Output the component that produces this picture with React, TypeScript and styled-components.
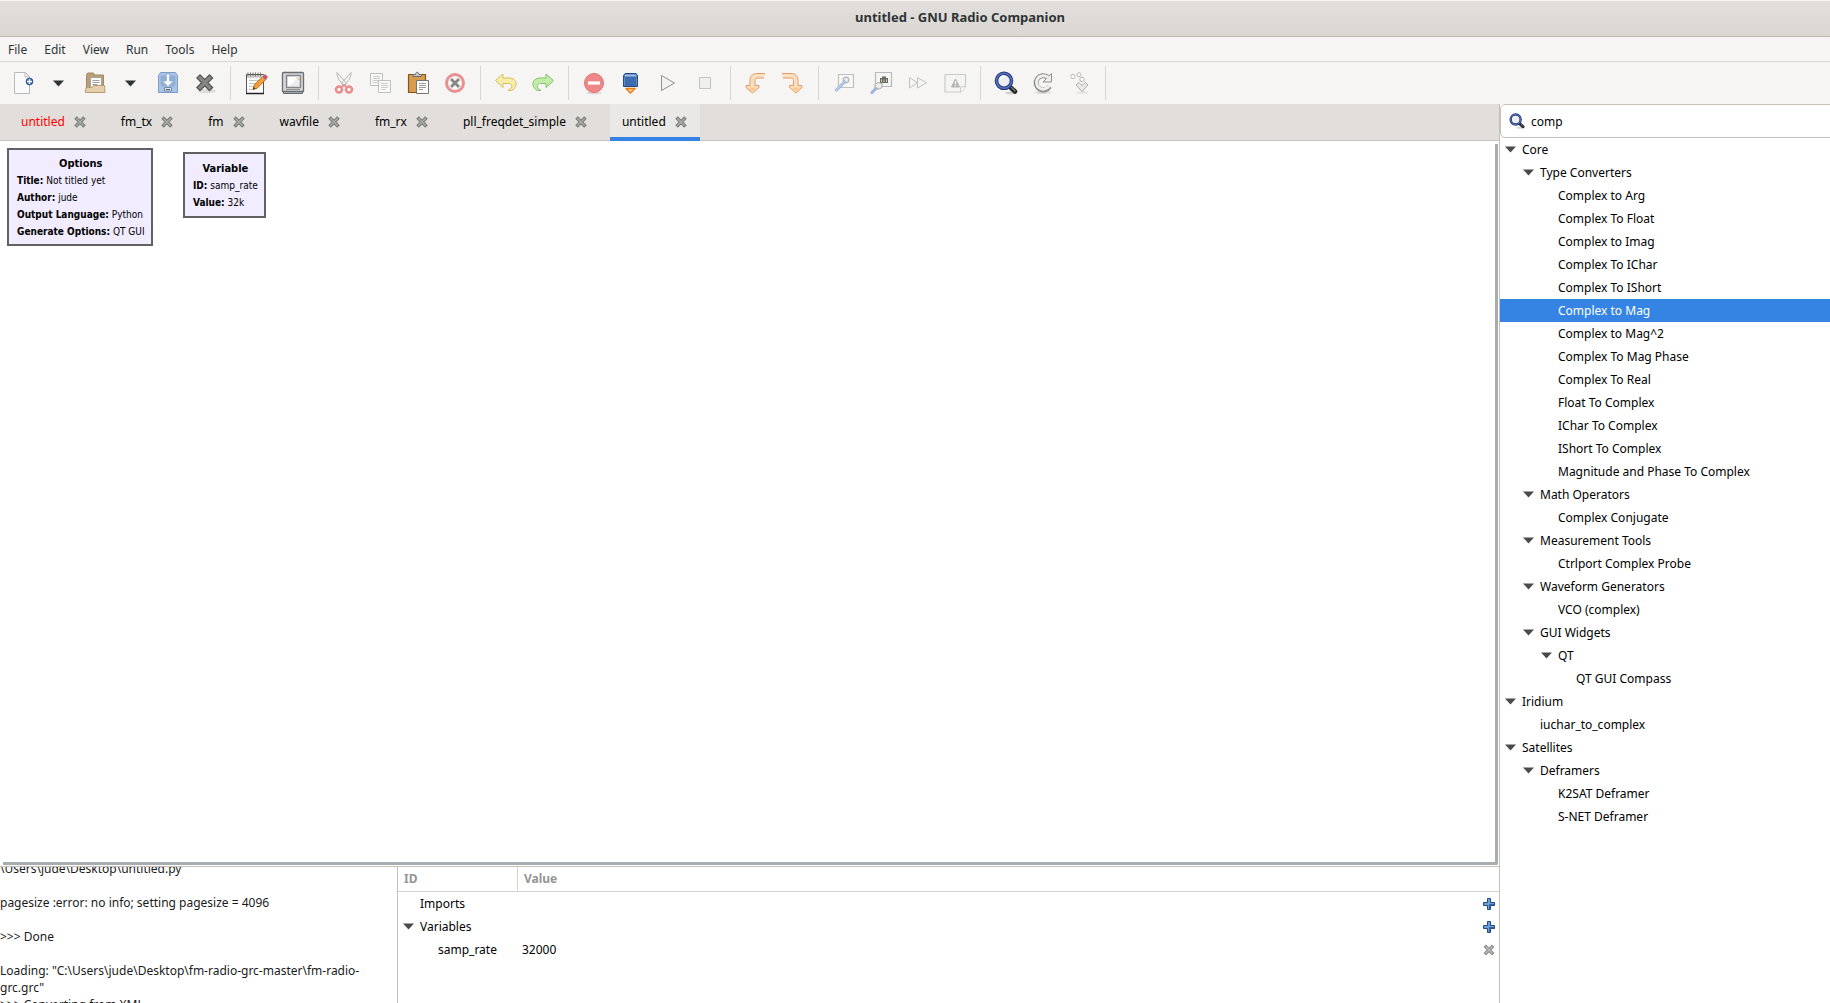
import React from 'react';
import styled, { createGlobalStyle, css } from 'styled-components';

const uiFont = '"Noto Sans", "Open Sans", sans-serif';

const GlobalStyle = createGlobalStyle`
  * { box-sizing: border-box; }
  body { margin: 0; background: #fff; overflow: hidden; }
  button { font: inherit; color: inherit; background: none; border: 0; padding: 0; margin: 0; }
  svg { display: block; flex: none; }
`;

const Window = styled.div`
  height: 100vh;
  display: flex;
  flex-direction: column;
  font: 12px/17px ${uiFont};
  color: #000;
  background: #fff;
`;

const TitleBar = styled.header`
  flex: none;
  height: 37px;
  display: flex;
  align-items: center;
  justify-content: center;
  padding: 0 0 2px 90px;
  border-top: 1px solid #f6f5f4;
  border-bottom: 1px solid #bfb8b1;
  background: linear-gradient(#e2dfdc, #dad6d2);
`;

const WindowTitle = styled.h1`
  margin: 0;
  font-size: 13px;
  line-height: 17px;
  font-weight: 700;
  color: #2e3436;
`;

const MenuBar = styled.nav`
  flex: none;
  height: 25px;
  display: flex;
  align-items: center;
  gap: 17px;
  padding: 0 8px;
  border-bottom: 1px solid #dbd8d5;
  background: #f6f5f4;
  color: #2e3436;
`;

const MenuItem = styled.button``;

const ToolBar = styled.div`
  flex: none;
  height: 42px;
  display: flex;
  align-items: center;
  padding: 0 5px;
  background: #f6f5f4;
`;

const ToolButton = styled.button<{ $narrow?: boolean }>`
  width: ${p => (p.$narrow ? 35 : 37)}px;
  height: 34px;
  display: flex;
  align-items: center;
  justify-content: center;
  padding-right: ${p => (p.$narrow ? 2 : 0)}px;
`;

const Divider = styled.span`
  width: 1px;
  height: 34px;
  margin: 0 6px 0 7px;
  background: #d8d5d2;
`;

const Body = styled.div`
  flex: 1;
  min-height: 0;
  display: grid;
  grid-template-columns: minmax(0, 1fr) 330px;
`;

const Workspace = styled.main`
  min-height: 0;
  display: flex;
  flex-direction: column;
  border-right: 1px solid #c5bfba;
`;

const TabBar = styled.div`
  flex: none;
  height: 37px;
  display: flex;
  gap: 10px;
  padding-left: 9px;
  border-bottom: 1px solid #c9c4be;
  background: #e1dedb;
`;

const Tab = styled.div<{ $active?: boolean; $dirty?: boolean }>`
  display: flex;
  align-items: center;
  gap: 7px;
  padding: 0 11px 1px 12px;
  color: ${p => (p.$dirty ? '#f00' : '#000')};
  ${p => p.$active && css`
    background: #eae8e6;
    box-shadow: inset 0 -4px #3584e4;
    margin-bottom: -1px;
    padding-bottom: 2px;
  `}
`;

const Canvas = styled.section`
  position: relative;
  flex: 1;
  min-height: 0;
  margin: 3px 1px 1px 3px;
  border-right: 3px solid #a8adaf;
  border-bottom: 3px solid #a8adaf;
  border-bottom-right-radius: 2px;
`;

const Block = styled.article<{ $x: number; $y: number }>`
  position: absolute;
  left: ${p => p.$x}px;
  top: ${p => p.$y}px;
  min-height: 66px;
  display: flex;
  flex-direction: column;
  justify-content: center;
  padding: 5px 6px 4px 8px;
  border: 2px solid #616161;
  background: #f1ecff;
  font: 10px/17px "DejaVu Sans Condensed", "DejaVu Sans", sans-serif;
  font-stretch: condensed;
  white-space: nowrap;
`;

const BlockTitle = styled.h2`
  margin: 0;
  font-size: 11px;
  line-height: 17px;
  text-align: center;
`;

const Param = styled.div``;

const BottomPane = styled.div`
  flex: none;
  height: 137px;
  display: grid;
  grid-template-columns: 397px minmax(0, 1fr);
  border-top: 1px solid #c5bfba;
`;

const Console = styled.pre`
  margin: 0;
  display: flex;
  align-items: flex-start;
  overflow: hidden;
  font: 12px/17px ${uiFont};
  color: #1a1a1a;
`;

const ConsoleText = styled.code`
  font: inherit;
  margin-top: -7px;
`;

const VariablePane = styled.div`
  border-left: 1px solid #c5bfba;
`;

const VariableTable = styled.table`
  width: 100%;
  table-layout: fixed;
  border-collapse: separate;
  border-spacing: 0;
`;

const HeadCell = styled.th<{ $width?: number }>`
  width: ${p => (p.$width ? p.$width + 'px' : 'auto')};
  height: 25px;
  padding: 0 6px 2px;
  text-align: left;
  font-weight: 700;
  color: #929595;
  border-bottom: 1px solid #d5d2cf;
  &:nth-child(2) { border-left: 1px solid #d5d2cf; }
`;

const Cell = styled.td<{ $indent?: number }>`
  height: 23px;
  padding: 0 0 0 ${p => p.$indent ?? 5}px;
`;

const CellLine = styled.div`
  display: flex;
  align-items: center;
  gap: 6px;
`;

const CellButton = styled.button`
  display: block;
`;

const Sidebar = styled.aside`
  display: flex;
  flex-direction: column;
  background: #fff;
  overflow: hidden;
`;

const SearchBox = styled.label`
  flex: none;
  height: 34px;
  display: flex;
  align-items: center;
  gap: 6px;
  margin-right: -6px;
  padding-left: 8px;
  border: 1px solid #c8c2bb;
  border-radius: 5px;
`;

const SearchInput = styled.input`
  flex: 1;
  min-width: 0;
  border: 0;
  outline: 0;
  padding: 0;
  font: 12px/17px ${uiFont};
`;

const Tree = styled.ul`
  margin: 0;
  padding: 0;
  list-style: none;
`;

const TreeRow = styled.li<{ $depth: number; $selected?: boolean }>`
  height: 23px;
  display: flex;
  align-items: center;
  gap: 6px;
  padding-left: ${p => 5 + p.$depth * 18}px;
  background: ${p => (p.$selected ? '#3584e4' : 'transparent')};
  color: ${p => (p.$selected ? '#fff' : '#000')};
`;

const Spacer = styled.span`
  width: 11px;
`;

const Icon = ({ children, size = 24 }: { children: React.ReactNode; size?: number }) => (
  <svg width={size} height={size} viewBox="0 0 24 24" fill="none" strokeLinejoin="round" aria-hidden="true">{children}</svg>
);

const Arrow = ({ color = '#4a4a4a' }: { color?: string }) => (
  <svg width="11" height="7" viewBox="0 0 11 7" aria-hidden="true"><path d="M0 .5h11L5.500 6.500z" fill={color} /></svg>
);

const SmallClose = () => (
  <svg width="16" height="16" viewBox="0 0 16 16" aria-hidden="true">
    <path d="M4.800 4.800l6.400 6.400M11.200 4.800l-6.400 6.400" stroke="#777b76" strokeWidth="3.600" strokeLinecap="square" />
    <path d="M4.800 4.800l6.400 6.400M11.200 4.800l-6.400 6.400" stroke="#a9aca8" strokeWidth="1.600" strokeLinecap="square" />
  </svg>
);

const Plus = () => (
  <svg width="12" height="12" viewBox="0 0 12 12" aria-hidden="true">
    <path d="M4.500.5h3v4h4v3h-4v4h-3v-4h-4v-3h4z" fill="#6f9fd6" stroke="#204a87" strokeLinejoin="round" />
    <path d="M6 6h5v1H7v4H6z" fill="#3465a4" />
  </svg>
);

const GreyCross = () => (
  <svg width="12" height="12" viewBox="0 0 12 12" aria-hidden="true">
    <path d="M3 3l6 6M9 3l-6 6" stroke="#888a85" strokeWidth="3.400" strokeLinecap="square" />
    <path d="M3 3l6 6M9 3l-6 6" stroke="#bcbeba" strokeWidth="1.400" strokeLinecap="square" />
  </svg>
);

const Magnifier = ({ size }: { size?: number }) => (
  <Icon size={size}>
    <ellipse cx="17" cy="22" rx="6" ry="1.500" fill="#000" opacity=".15" />
    <path d="M15.500 15.500l5.500 5" stroke="#222" strokeWidth="4.500" strokeLinecap="round" />
    <path d="M17.500 16.500l3.500 3.500" stroke="#77796f" strokeWidth="1.500" strokeLinecap="round" />
    <circle cx="10" cy="9.800" r="7.500" fill="#eceef2" stroke="#26367c" strokeWidth="3.600" />
    <circle cx="10" cy="9.800" r="7.500" stroke="#5873bd" strokeWidth="1.500" />
    <path d="M6 9a4.500 4.500 0 014-4" stroke="#fff" strokeWidth="2" />
  </Icon>
);

const icons: Record<string, React.ReactNode> = {
  New: <Icon>
    <path d="M2.500 1.500h11l4 4v17h-15z" fill="#fafafa" stroke="#b8bab6" />
    <path d="M13 2v4h4.500" fill="#e6e6e4" stroke="#c4c6c2" />
    <circle cx="17.500" cy="10.500" r="3.500" fill="#3465a4" stroke="#204a87" strokeWidth=".6" />
    <path d="M17.500 8v5M15 10.500h5" stroke="#fff" strokeWidth="1.400" />
  </Icon>,
  Open: <Icon>
    <path d="M2.500 20V3.500l1-1.500h6l1 2h9v16z" fill="#b99f75" stroke="#a08a66" />
    <path d="M6.500 6.500h11v10h-11z" fill="#fafafa" stroke="#a3a39c" />
    <path d="M8.500 9.500h7M8.500 11.500h7M8.500 13.500h5" stroke="#a0a29d" />
    <path d="M1.500 21.500l.5-5h6l1.500-2h11l.5 7z" fill="#e7cfae" stroke="#b89c76" />
  </Icon>,
  Save: <Icon>
    <path d="M4.500 1.500h15l2 3v17h-19v-17z" fill="#a9c3e4" stroke="#7f9cc6" />
    <path d="M4.500 4.500h15v8l-1 3h-13l-1-3z" fill="#8fafd8" />
    <path d="M10.500 3h3v7h4L12 15.500 6.500 10h4z" fill="#fcfcfc" stroke="#8ca5c4" strokeWidth=".6" />
    <path d="M8.500 16.500h7v3.500h-7z" fill="#e0e4e9" stroke="#718aaa" /><path d="M10 18.500h4" stroke="#596c86" />
  </Icon>,
  Close: <Icon>
    <ellipse cx="14" cy="20" rx="9" ry="2" fill="#000" opacity=".1" />
    <path d="M7 7l9.500 9.500M16.500 7L7 16.500" stroke="#505350" strokeWidth="5.600" strokeLinecap="square" />
    <path d="M7 7l9.500 9.500M16.500 7L7 16.500" stroke="#858884" strokeWidth="3.200" strokeLinecap="square" />
  </Icon>,
  Edit: <Icon>
    <path d="M2.500 3.500h17v19h-17z" fill="#fff" stroke="#50534f" />
    <path d="M3 4h16v3H3z" fill="#d5d6d2" /><path d="M2 22.500h18" stroke="#222" strokeWidth="1.500" />
    <path d="M4 1.500v4M6.500 1.500v4M9 1.500v4M11.500 1.500v4M14 1.500v4M16.500 1.500v4" stroke="#70726e" />
    <path d="M5 9.500h11M5 12.500h8M5 15.500h5M5 18.500h4" stroke="#c4c6c2" />
    <path d="M9 18.500l1.200-4.500 9-9 3.200 3-9.400 9.400z" fill="#f5a13a" stroke="#a35c0a" strokeWidth=".8" />
    <path d="M18 6l3.200 3 2-2c1-2-1.700-4-3.200-3z" fill="#e34b4b" stroke="#a5aab0" />
    <path d="M9 18.500l.8-2.500 1.600 1.500z" fill="#222" />
  </Icon>,
  Screen: <Icon>
    <path d="M2.500 1.500h19a1 1 0 011 1v18h-21v-18a1 1 0 011-1z" fill="#d8d8da" stroke="#6a6c70" strokeWidth="1.300" />
    <path d="M2.500 20.500h19v2h-19z" fill="#a2a3a5" stroke="#6a6c70" />
    <path d="M5.500 4.500h14v12h-14z" fill="#ececec" stroke="#85878a" strokeWidth="1.400" />
    <path d="M7 15V6h8c-1 5-4 7-8 9z" fill="#fff" /><path d="M5 18.500h14" stroke="#929497" />
    <path d="M18 7v2" stroke="#efa350" />
  </Icon>,
  Cut: <Icon>
    <path d="M5 1.500c-.5 5 3 9 7.500 13l2-2.500C11.500 9 8 5 5 1.500zM19 1.500c.5 5-3 9-7.500 13l-2-2.500C12.500 9 16 5 19 1.500z" fill="#f4f4f4" stroke="#b4b6b3" />
    <circle cx="7" cy="18.500" r="3" stroke="#e98d8d" strokeWidth="2.600" /><circle cx="17" cy="18.500" r="3" stroke="#e98d8d" strokeWidth="2.600" />
    <path d="M9.500 16l2.500-2 2.500 2" stroke="#e98d8d" strokeWidth="1.800" />
  </Icon>,
  Copy: <Icon>
    <path d="M1.500 2.500h12v12h-12z" fill="#f7f7f6" stroke="#bfc1be" /><path d="M4 5.500h7M4 7.500h7M4 9.500h7M4 11.500h5" stroke="#cfd0cd" />
    <path d="M9.500 9.500h12v12h-12z" fill="#f9f9f8" stroke="#bfc1be" /><path d="M12 12.500h7M12 14.500h7M12 16.500h7M12 18.500h5" stroke="#cfd0cd" />
  </Icon>,
  Paste: <Icon>
    <path d="M2.500 3.500h17v18h-17z" fill="#d79c4d" stroke="#865616" strokeWidth="1.200" />
    <path d="M7 5.500v-2h2.500c0-3 3.500-3 3.500 0h2.500v2z" fill="#c7c8c6" stroke="#6c6e6b" />
    <path d="M10.500 9.500h12v13h-12z" fill="#fff" stroke="#727570" /><path d="M13 12.500h7M13 14.500h7M13 16.500h7M13 18.500h4" stroke="#9a9c98" />
  </Icon>,
  Delete: <Icon>
    <circle cx="12" cy="12" r="8.500" fill="#f8f5f4" stroke="#e99090" strokeWidth="3" />
    <path d="M9 9l6 6M15 9l-6 6" stroke="#858785" strokeWidth="2.800" strokeLinecap="square" />
  </Icon>,
  Undo: <Icon>
    <path d="M1.500 9.500L9 3v4h6c9 0 9 10 2.500 12.500h-3.500c5-2 5-7 .5-7H9v4z" fill="#f7eca8" stroke="#d4bf5f" />
  </Icon>,
  Redo: <Icon>
    <path d="M22.500 9.500L15 3v4H9c-9 0-9 10-2.500 12.500H10c-5-2-5-7-.5-7H15v4z" fill="#c3ecaa" stroke="#85c16b" />
  </Icon>,
  Errors: <Icon>
    <ellipse cx="12" cy="22" rx="8" ry="1.500" fill="#000" opacity=".1" />
    <circle cx="12" cy="12" r="9.500" fill="#ee8787" stroke="#df7474" /><path d="M6 12h12" stroke="#fff" strokeWidth="3.200" />
  </Icon>,
  Generate: <Icon>
    <path d="M6 2.500h11l1.500 2v11h-14v-11z" fill="#3d6db0" stroke="#254b86" /><path d="M6 3.500h11l.5 2H5.500z" fill="#a5c0e2" />
    <path d="M5.500 6.500v8M17.500 6.500v8" stroke="#6f95c8" strokeWidth=".8" />
    <path d="M7 17.500h9l-4.500 4.500z" fill="#fbd19a" stroke="#ef7c0e" strokeWidth="1.500" />
  </Icon>,
  Run: <Icon><path d="M5.500 4.500v15l13-7.500z" fill="#f2f2f1" stroke="#90928f" /></Icon>,
  Stop: <Icon><path d="M6.500 6.500h11v11h-11z" fill="#efefee" stroke="#c2c4c1" /></Icon>,
  RotateLeft: <Icon>
    <path d="M21 2.500h-8c-5 0-7 3-7 7v5H2v2l6.500 5.500L15 16.500v-2h-4v-5c0-2 1-2.500 4-2.500h5" fill="#fce0bd" stroke="#df9c68" />
    <path d="M4 16.500h8.500l-4 4z" fill="#f9c88f" />
  </Icon>,
  RotateRight: <Icon>
    <path d="M1 2.500h9c5 0 7 3 7 7v5h4v2l-6 5.500-6.500-5.500v-2h4v-5c0-2-1-2.500-4-2.500H2" fill="#fce0bd" stroke="#df9c68" />
    <path d="M11 16.500h8l-4 4z" fill="#f9c88f" />
  </Icon>,
  Probe: <Icon>
    <path d="M6.500 3.500h15v13h-15z" fill="#f7f7f6" stroke="#bfc1be" strokeWidth="1.200" />
    <circle cx="14" cy="9" r="2.800" stroke="#b3b9c2" fill="#e6ebf2" strokeWidth="1.300" />
    <path d="M13.500 10l-10 10" stroke="#9bb6db" strokeWidth="3" /><path d="M13.500 10l-10 10" stroke="#cfdef2" />
  </Icon>,
  Plug: <Icon>
    <path d="M6.500 1.500h16v14h-16z" fill="#f5f5f4" stroke="#b8bab7" strokeWidth="1.200" />
    <path d="M11 12V7h2V5.500h4V7h2v5z" fill="#686a67" /><path d="M12.500 11V8.500M15 11V8.500M17.500 11V8.500" stroke="#d8c89c" />
    <path d="M6 13.500l3-2 4 1v4l-3 1.500H6z" fill="#ececeb" stroke="#a9aba8" /><path d="M8 16.500l-6 6" stroke="#9bb6db" strokeWidth="3" />
  </Icon>,
  Forward: <Icon><path d="M3.500 6.500v10.500l8-5.250zM11.500 6.500v10.500l9-5.250z" fill="#f5f5f4" stroke="#c1c3c0" /></Icon>,
  Warn: <Icon>
    <path d="M2.500 3.500h20v12l-5 5.500h-15.500v-17z" fill="#f4f4f3" stroke="#c9cbc8" strokeWidth="1.200" />
    <path d="M22.500 15.500l-5 .5v5" fill="#fff" stroke="#c9cbc8" />
    <path d="M12.500 8l4 8h-8z" fill="#b3b5b2" stroke="#b3b5b2" /><path d="M12.500 10v3.200M12.500 14v1.300" stroke="#fff" strokeWidth="1.200" />
  </Icon>,
  Find: <Magnifier />,
  Reload: <Icon>
    <ellipse cx="12" cy="21.500" rx="9" ry="1.500" fill="#000" opacity=".1" />
    <path d="M18.500 15.500A7.200 7.200 0 1116.500 6" stroke="#8e908d" strokeWidth="5" />
    <path d="M20.500 2.500v8.500h-8.500z" fill="#eeeeed" stroke="#8e908d" />
    <path d="M18 15.200A6.800 6.800 0 1117 6.500" stroke="#eeeeed" strokeWidth="3" />
  </Icon>,
  Hier: <Icon>
    <g stroke="#b9bbb8" fill="#f7f7f6"><circle cx="5" cy="5.500" r="2.200" /><circle cx="11" cy="3.700" r="2" /><circle cx="14" cy="8.500" r="2.300" />
    <path d="M8 14l2.500-2.500 3.500 3 3.500-3L20 14l-6 6.500z" fill="#e9e9e8" stroke="#aaaca9" /></g>
    <ellipse cx="14" cy="21.500" rx="6" ry="1.200" fill="#000" opacity=".08" />
  </Icon>,
};

const toolGroups: string[][] = [
  ['New', 'v', 'Open', 'v', 'Save', 'Close'],
  ['Edit', 'Screen'],
  ['Cut', 'Copy', 'Paste', 'Delete'],
  ['Undo', 'Redo'],
  ['Errors', 'Generate', 'Run', 'Stop'],
  ['RotateLeft', 'RotateRight'],
  ['Probe', 'Plug', 'Forward', 'Warn'],
  ['Find', 'Reload', 'Hier'],
];

const tabs = ['untitled', 'fm_tx', 'fm', 'wavfile', 'fm_rx', 'pll_freqdet_simple', 'untitled'];

type Node = [depth: number, label: string, open?: boolean];
const tree: Node[] = [
  [0, 'Core', true],
  [1, 'Type Converters', true],
  [2, 'Complex to Arg'],
  [2, 'Complex To Float'],
  [2, 'Complex to Imag'],
  [2, 'Complex To IChar'],
  [2, 'Complex To IShort'],
  [2, 'Complex to Mag'],
  [2, 'Complex to Mag^2'],
  [2, 'Complex To Mag Phase'],
  [2, 'Complex To Real'],
  [2, 'Float To Complex'],
  [2, 'IChar To Complex'],
  [2, 'IShort To Complex'],
  [2, 'Magnitude and Phase To Complex'],
  [1, 'Math Operators', true],
  [2, 'Complex Conjugate'],
  [1, 'Measurement Tools', true],
  [2, 'Ctrlport Complex Probe'],
  [1, 'Waveform Generators', true],
  [2, 'VCO (complex)'],
  [1, 'GUI Widgets', true],
  [2, 'QT', true],
  [3, 'QT GUI Compass'],
  [0, 'Iridium', true],
  [1, 'iuchar_to_complex'],
  [0, 'Satellites', true],
  [1, 'Deframers', true],
  [2, 'K2SAT Deframer'],
  [2, 'S-NET Deframer'],
];

const log = `\\Users\\jude\\Desktop\\untitled.py

pagesize :error: no info; setting pagesize = 4096

>>> Done

Loading: "C:\\Users\\jude\\Desktop\\fm-radio-grc-master\\fm-radio-
grc.grc"
>>> Converting from XML...`;

export default function App() {
  return (
    <Window>
      <GlobalStyle />
      <TitleBar><WindowTitle>untitled - GNU Radio Companion</WindowTitle></TitleBar>
      <MenuBar>
        {['File', 'Edit', 'View', 'Run', 'Tools', 'Help'].map(m => <MenuItem key={m}>{m}</MenuItem>)}
      </MenuBar>
      <ToolBar>
        {toolGroups.map((group, g) => (
          <React.Fragment key={g}>
            {group.map((name, i) => name === 'v'
              ? <ToolButton key={i} $narrow aria-label={`${group[i - 1]} menu`}><Arrow color="#2e3436" /></ToolButton>
              : <ToolButton key={i} aria-label={name}>{icons[name]}</ToolButton>)}
            <Divider />
          </React.Fragment>
        ))}
      </ToolBar>
      <Body>
        <Workspace>
          <TabBar>
            {tabs.map((t, i) => (
              <Tab key={i} $dirty={i === 0} $active={i === tabs.length - 1}>
                <button>{t}</button>
                <button aria-label={`Close ${t}`}><SmallClose /></button>
              </Tab>
            ))}
          </TabBar>
          <Canvas>
            <Block $x={4} $y={4}>
              <BlockTitle>Options</BlockTitle>
              <Param><b>Title:</b> Not titled yet</Param>
              <Param><b>Author:</b> jude</Param>
              <Param><b>Output Language:</b> Python</Param>
              <Param><b>Generate Options:</b> QT GUI</Param>
            </Block>
            <Block $x={180} $y={8}>
              <BlockTitle>Variable</BlockTitle>
              <Param><b>ID:</b> samp_rate</Param>
              <Param><b>Value:</b> 32k</Param>
            </Block>
          </Canvas>
          <BottomPane>
            <Console><ConsoleText>{log}</ConsoleText></Console>
            <VariablePane>
              <VariableTable>
                <thead>
                  <tr><HeadCell $width={119}>ID</HeadCell><HeadCell>Value</HeadCell><HeadCell $width={16} aria-label="Actions" /></tr>
                </thead>
                <tbody>
                  <tr><Cell $indent={22}>Imports</Cell><Cell /><Cell $indent={0}><CellButton aria-label="Add import"><Plus /></CellButton></Cell></tr>
                  <tr><Cell><CellLine><Arrow />Variables</CellLine></Cell><Cell /><Cell $indent={0}><CellButton aria-label="Add variable"><Plus /></CellButton></Cell></tr>
                  <tr><Cell $indent={40}>samp_rate</Cell><Cell>32000</Cell><Cell $indent={0}><CellButton aria-label="Remove samp_rate"><GreyCross /></CellButton></Cell></tr>
                </tbody>
              </VariableTable>
            </VariablePane>
          </BottomPane>
        </Workspace>
        <Sidebar>
          <SearchBox>
            <Magnifier size={16} />
            <SearchInput type="text" aria-label="Search blocks" defaultValue="comp" />
          </SearchBox>
          <Tree>
            {tree.map(([depth, label, open], i) => (
              <TreeRow key={i} $depth={depth} $selected={label === 'Complex to Mag'}>
                {open ? <Arrow /> : <Spacer />}
                <span>{label}</span>
              </TreeRow>
            ))}
          </Tree>
        </Sidebar>
      </Body>
    </Window>
  );
}
